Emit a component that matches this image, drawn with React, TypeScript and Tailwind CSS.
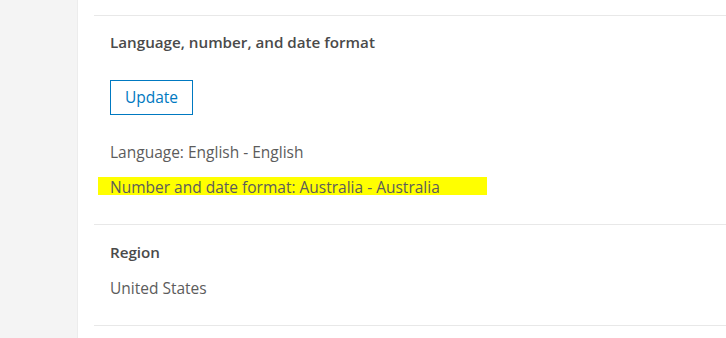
export default function App() {
  return (
    <div className="flex h-[338px] w-full overflow-hidden bg-white font-['Open_Sans','Lato',sans-serif] text-[15.5px]">
      {/* side rail */}
      <div className="w-[78px] shrink-0 border-r border-[#ececec] bg-[#f4f4f4]" />

      <div className="flex-1 pl-[16px] pt-[15px]">
        {/* language section */}
        <div className="border-t border-[#e8e8e8] pl-[16px] pt-[16px] pb-[27px]">
          <h2 className="h-[20px] text-[15.2px] leading-[20px] font-semibold text-[#4a4a4a]">Language, number, and date format</h2>
          <button className="mt-[28px] h-[35px] w-[83px] border border-[#0079c1] font-normal text-[#0079c1] leading-[33px]">
            Update
          </button>
          <p className="mt-[27px] h-[20px] leading-[20px] text-[#5c5c5c]">Language: English - English</p>
          <div className="relative mt-[15px] h-[20px]">
            <div className="absolute left-[-12px] top-[0px] h-[18px] w-[389px] bg-[#ffff00]" />
            <p className="relative leading-[20px] text-[#5c5c5c]">Number and date format: Australia - Australia</p>
          </div>
        </div>

        {/* region section */}
        <div className="border-t border-b border-[#e8e8e8] pl-[16px] pt-[17px] pb-[27px]">
          <h2 className="h-[20px] text-[15.2px] leading-[20px] font-semibold text-[#4a4a4a]">Region</h2>
          <p className="mt-[16px] h-[20px] leading-[20px] text-[#5c5c5c]">United States</p>
        </div>
      </div>
    </div>
  );
}
